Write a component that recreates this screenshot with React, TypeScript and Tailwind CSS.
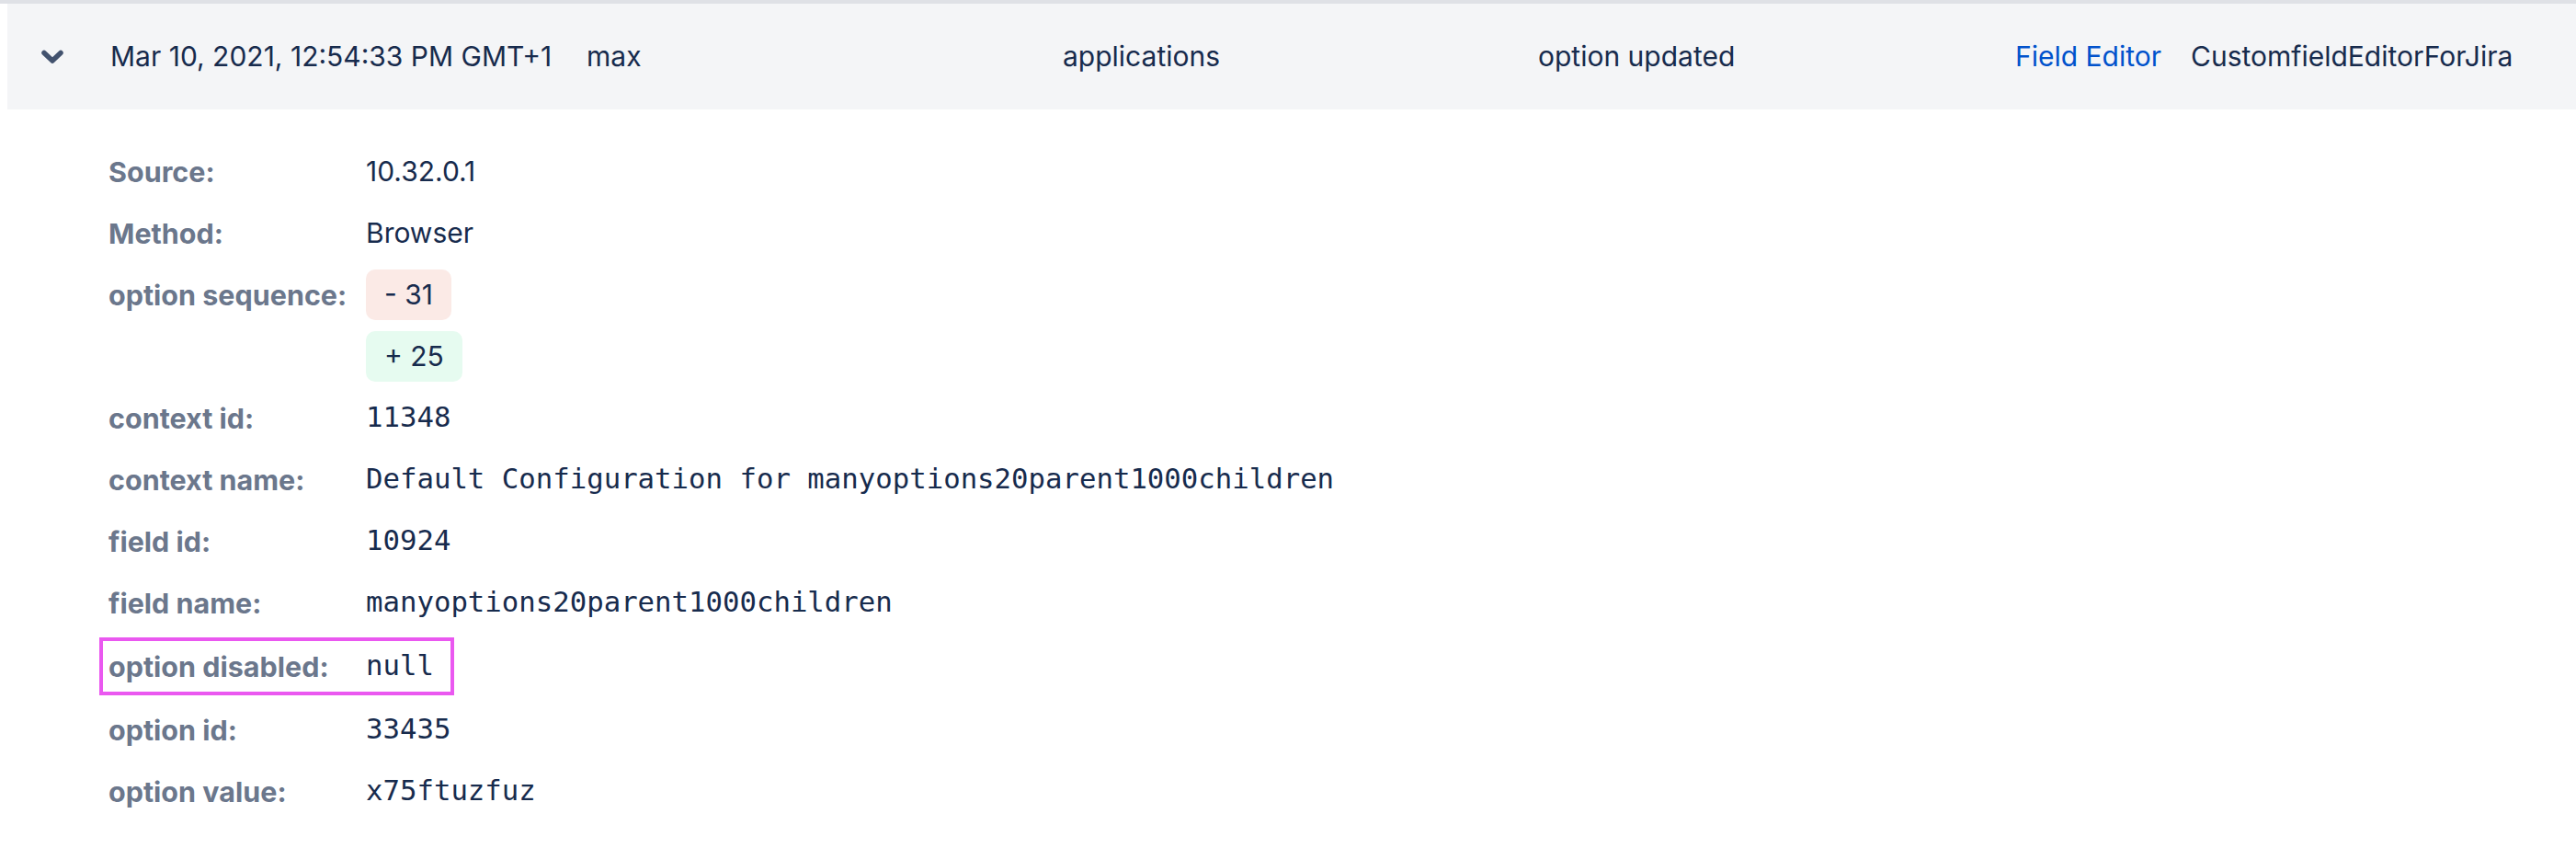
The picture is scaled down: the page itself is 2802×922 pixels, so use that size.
import React from 'react';

const sans = "font-['Inter','Noto_Sans',sans-serif]";
const mono = "font-['DejaVu_Sans_Mono','Liberation_Mono',monospace] text-[30.7px]";

type Row = { label: string; value?: string; mono?: boolean; diff?: { removed: string; added: string }; highlight?: boolean };

const rows: Row[] = [
  { label: 'Source:', value: '10.32.0.1' },
  { label: 'Method:', value: 'Browser' },
  { label: 'option sequence:', diff: { removed: '- 31', added: '+ 25' } },
  { label: 'context id:', value: '11348', mono: true },
  { label: 'context name:', value: 'Default Configuration for manyoptions20parent1000children', mono: true },
  { label: 'field id:', value: '10924', mono: true },
  { label: 'field name:', value: 'manyoptions20parent1000children', mono: true },
  { label: 'option disabled:', value: 'null', mono: true, highlight: true },
  { label: 'option id:', value: '33435', mono: true },
  { label: 'option value:', value: 'x75ftuzfuz', mono: true },
];

const Chevron = () => (
  <svg width="24" height="16" viewBox="0 0 24 16" className="text-[#42526e]">
    <path d="M3 3.5 L12 12 L21 3.5" fill="none" stroke="currentColor" strokeWidth="5.5" strokeLinecap="round" strokeLinejoin="round" />
  </svg>
);

const DetailRow = ({ row }: { row: Row }) => {
  const content = (
    <>
      <div className="w-[280px] shrink-0 h-[55px] flex items-center font-bold text-[30.5px] text-[#6b778c]">{row.label}</div>
      {row.diff ? (
        <div className="flex flex-col gap-[12px]">
          <span className="h-[55px] self-start flex items-center px-[20px] rounded-[10px] bg-[#fbeae6] text-[#172b4d]">{row.diff.removed}</span>
          <span className="h-[55px] self-start flex items-center px-[20px] rounded-[10px] bg-[#e6fbf0] text-[#172b4d]">{row.diff.added}</span>
        </div>
      ) : (
        <div className={`h-[55px] flex items-center text-[#172b4d] ${row.mono ? mono : ''}`}>{row.value}</div>
      )}
    </>
  );

  if (row.highlight) {
    return (
      <div className="flex mt-[2px] mb-[2px]">
        <div className="relative flex">
          {content}
          <span className="absolute -left-[10px] -right-[22px] -top-[4px] -bottom-[4px] border-4 border-[#ea58f0] pointer-events-none" />
        </div>
      </div>
    );
  }
  return <div className="flex items-start">{content}</div>;
};

export default function App() {
  return (
    <div className={`w-[2802px] min-h-[922px] bg-white text-[30px] text-[#172b4d] ${sans}`}>
      <div className="h-[4px] bg-[#dfe1e6]" />
      <div className="ml-[8px] h-[115px] bg-[#f4f5f7] flex items-center">
        <div className="w-[112px] shrink-0 pl-[37px] flex items-center"><Chevron /></div>
        <div className="w-[518px] shrink-0">Mar 10, 2021, 12:54:33 PM GMT+1</div>
        <div className="w-[518px] shrink-0">max</div>
        <div className="w-[517px] shrink-0">applications</div>
        <div className="w-[519px] shrink-0">option updated</div>
        <div className="w-[191px] shrink-0 text-[#0052cc]">Field Editor</div>
        <div>CustomfieldEditorForJira</div>
      </div>
      <div className="pt-[40px] pl-[118px] flex flex-col gap-[12px]">
        {rows.map((r) => (
          <DetailRow key={r.label} row={r} />
        ))}
      </div>
    </div>
  );
}
